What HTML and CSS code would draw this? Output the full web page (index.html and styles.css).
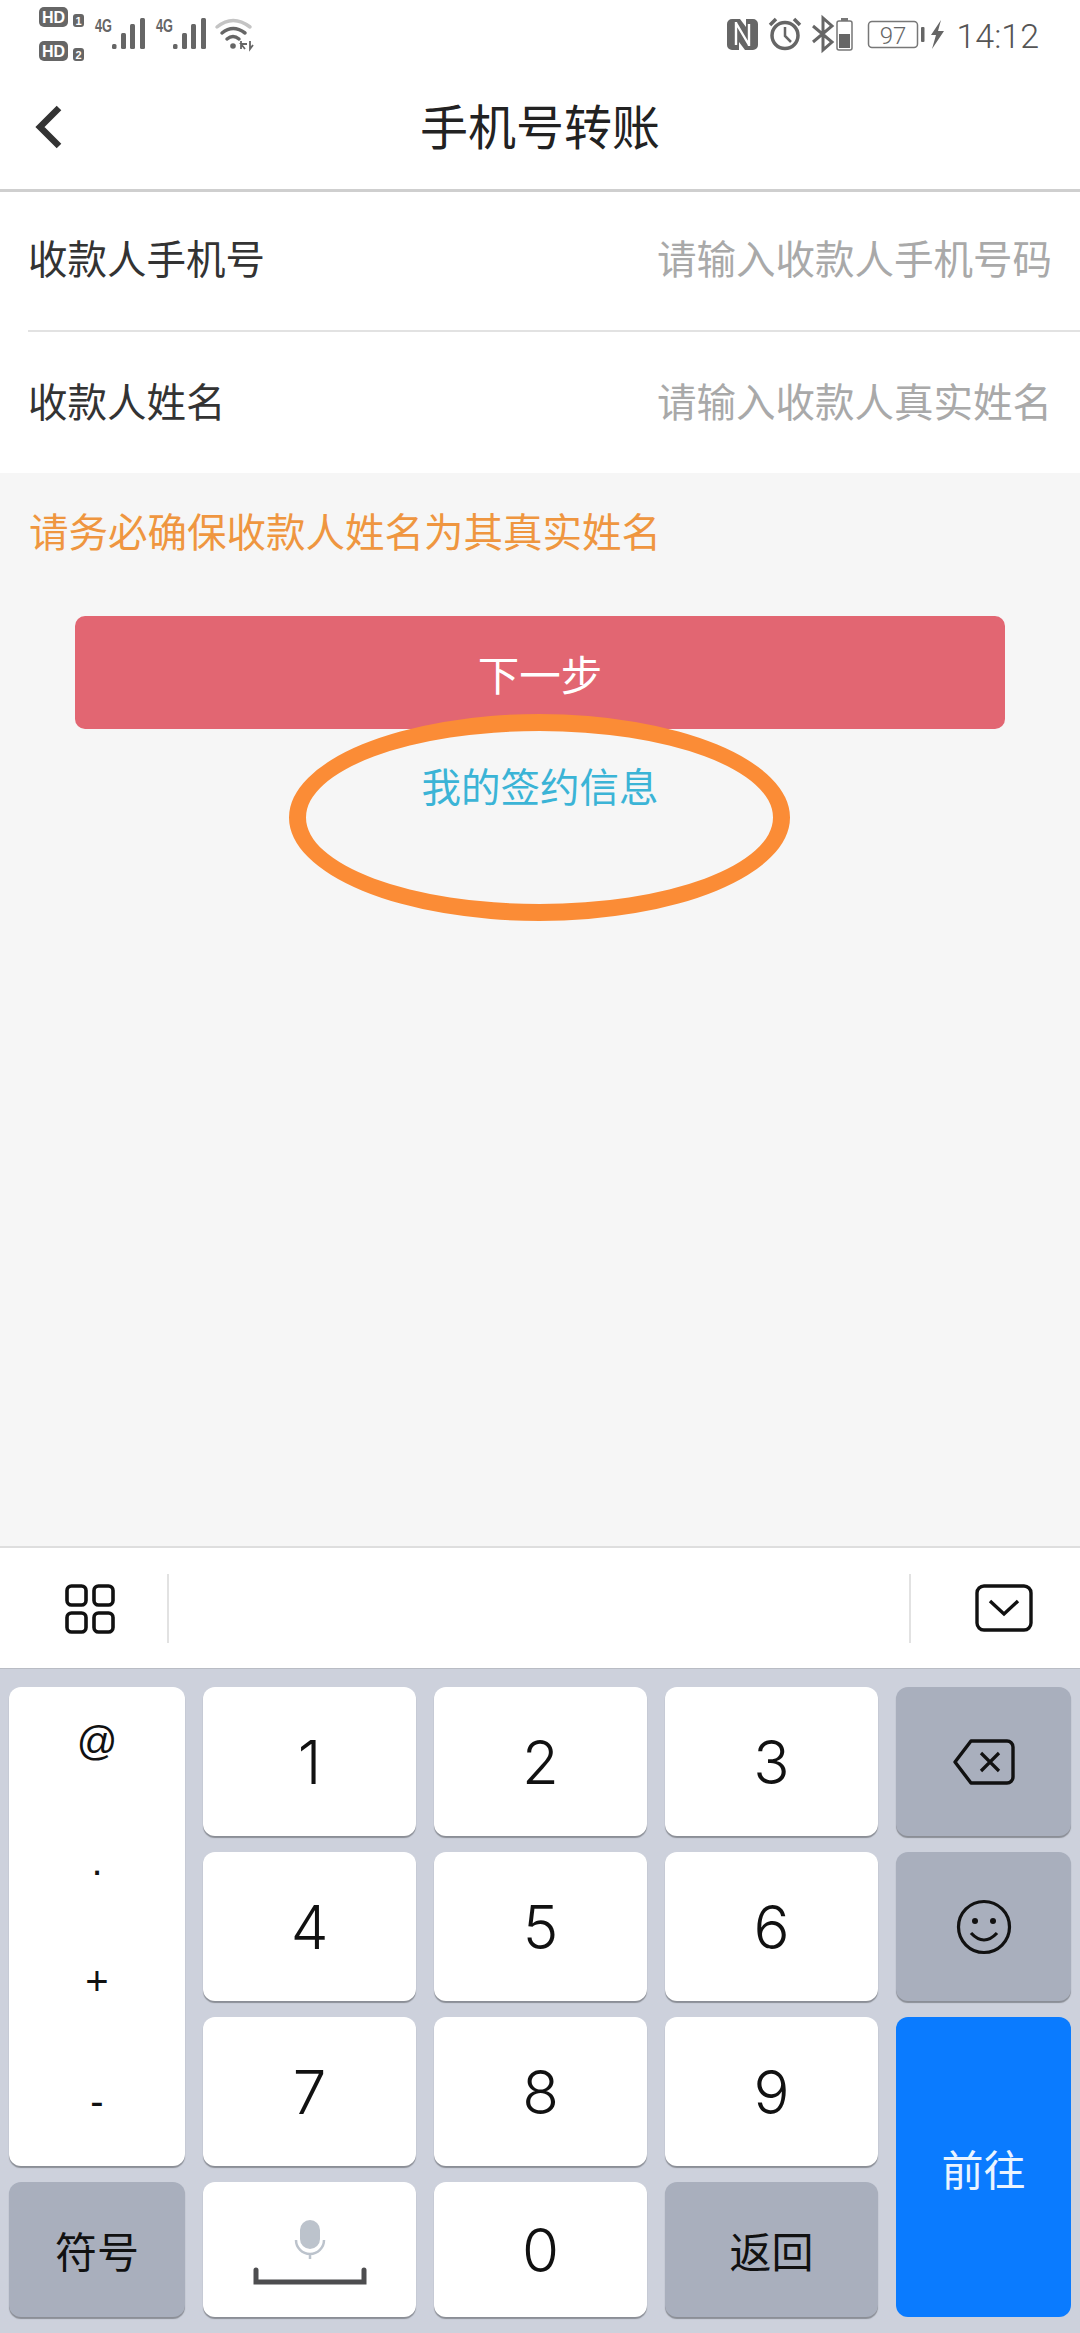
FILE: index.html
```html
<!DOCTYPE html>
<html lang="zh-CN">
<head>
<meta charset="utf-8">
<title>手机号转账</title>
<link rel="stylesheet" href="styles.css">
</head>
<body>
<div class="page">
  <div class="status">
    <svg class="status-left" viewBox="0 0 260 64" width="260" height="64">
      <rect x="39" y="7" width="29" height="20" rx="5" fill="#666"/>
      <text x="53.5" y="23" class="hd">HD</text>
      <rect x="73" y="14" width="11" height="13" rx="3" fill="#666"/>
      <text x="78.5" y="25" class="hdn">1</text>
      <rect x="39" y="41" width="29" height="20" rx="5" fill="#666"/>
      <text x="53.5" y="57" class="hd">HD</text>
      <rect x="73" y="48" width="11" height="13" rx="3" fill="#666"/>
      <text x="78.5" y="59" class="hdn">2</text>
      <text x="95" y="32" class="g4" textLength="17" lengthAdjust="spacingAndGlyphs">4G</text>
      <g fill="#666">
        <rect x="112" y="44" width="4.5" height="5" rx="1.5"/>
        <rect x="121" y="33" width="5" height="16" rx="1.5"/>
        <rect x="130" y="24" width="5" height="25" rx="1.5"/>
        <rect x="140" y="18" width="5" height="31" rx="1.5"/>
      </g>
      <text x="156" y="32" class="g4" textLength="17" lengthAdjust="spacingAndGlyphs">4G</text>
      <g fill="#666">
        <rect x="173" y="44" width="4.5" height="5" rx="1.5"/>
        <rect x="182" y="33" width="5" height="16" rx="1.5"/>
        <rect x="191" y="24" width="5" height="25" rx="1.5"/>
        <rect x="201" y="18" width="5" height="31" rx="1.5"/>
      </g>
      <g fill="none" stroke-linecap="round">
        <path d="M217 27 Q233 14 250 27" stroke="#c4c4c4" stroke-width="3.5"/>
        <path d="M222 33 Q233 24 245 33" stroke="#666" stroke-width="3.5"/>
        <path d="M227 39 Q233 34 239 39" stroke="#666" stroke-width="3.5"/>
      </g>
      <circle cx="233" cy="46" r="2.8" fill="#666"/>
      <path d="M241 49 V41 M245 49 L241 44 H247 M250 41 V49 L253 45" fill="none" stroke="#666" stroke-width="1.8"/>
    </svg>
    <div class="status-right">
      <svg viewBox="732 0 218 64" width="218" height="64">
        <path d="M737 19 H745 L751 27 V19 H758 a5 5 0 0 1 5 5 V45 a5 5 0 0 1 -5 5 H750 L744 42 V50 H737 a5 5 0 0 1 -5 -5 V24 a5 5 0 0 1 5 -5 Z" fill="#666"/>
        <path d="M741 22 V45 M741 23 L754 45 M754 24 V46" fill="none" stroke="#fff" stroke-width="2.4"/>
        <circle cx="790" cy="35.5" r="13" fill="none" stroke="#666" stroke-width="3.5"/>
        <path d="M790 27 V36 L796 42" fill="none" stroke="#666" stroke-width="2.5"/>
        <path d="M775 25 L781 19 M805 25 L799 19" stroke="#666" stroke-width="3.5"/>
        <path d="M818 26 L837 42 L828 50 V18 L837 26 L818 42" fill="none" stroke="#666" stroke-width="3"/>
        <rect x="846" y="18" width="7" height="3" fill="#777"/>
        <rect x="842" y="21" width="15" height="29" rx="2" fill="none" stroke="#777" stroke-width="1.5"/>
        <rect x="844" y="34" width="11" height="14" fill="#666"/>
        <rect x="873.5" y="21.5" width="49" height="26" rx="3.5" fill="none" stroke="#777" stroke-width="1.5"/>
        <text x="898" y="44" class="pct">97</text>
        <rect x="926" y="27" width="3.5" height="15" rx="1" fill="#666"/>
        <path d="M946 20 L936 35 H941 L937 49 L949 31 H943 Z" fill="#666"/>
      </svg>
      <span class="time">14:12</span>
    </div>
  </div>

  <header class="nav">
    <svg class="back" viewBox="0 0 32 50" width="32" height="50">
      <path d="M27 6 L8 25 L27 44" fill="none" stroke="#333" stroke-width="6.5"/>
    </svg>
    <h1 class="title">手机号转账</h1>
  </header>

  <section class="form">
    <div class="row first"><span class="label">收款人手机号</span><span class="hint">请输入收款人手机号码</span></div>
    <div class="row"><span class="label">收款人姓名</span><span class="hint">请输入收款人真实姓名</span></div>
  </section>

  <main class="main">
    <p class="warn">请务必确保收款人姓名为其真实姓名</p>
    <div class="next">下一步</div>
    <div class="link">我的签约信息</div>
    <div class="circle"></div>
  </main>

  <div class="toolbar">
    <div class="tool-side">
      <svg viewBox="0 0 50 50" width="50" height="50">
        <g fill="none" stroke="#111" stroke-width="3.6">
          <rect x="2" y="2" width="19" height="19" rx="4.5"/>
          <rect x="29" y="2" width="19" height="19" rx="4.5"/>
          <rect x="2" y="29" width="19" height="19" rx="4.5"/>
          <rect x="29" y="29" width="19" height="19" rx="4.5"/>
        </g>
      </svg>
    </div>
    <div class="tool-mid"></div>
    <div class="tool-side right">
      <svg viewBox="0 0 58 48" width="58" height="48">
        <rect x="2" y="2" width="54" height="44" rx="7" fill="none" stroke="#111" stroke-width="3.4"/>
        <path d="M15 17 L29 30 L43 17" fill="none" stroke="#111" stroke-width="3.4"/>
      </svg>
    </div>
  </div>

  <div class="keyboard">
    <div class="key side-list">
      <span>@</span><span>.</span><span>+</span><span>-</span>
    </div>
    <div class="key digit">1</div>
    <div class="key digit">2</div>
    <div class="key digit">3</div>
    <div class="key gray">
      <svg viewBox="0 0 62 46" width="62" height="46">
        <path d="M18 2 H54 a6 6 0 0 1 6 6 V38 a6 6 0 0 1 -6 6 H18 L2 23 Z" fill="none" stroke="#111" stroke-width="3.4" stroke-linejoin="round"/>
        <path d="M28 14 L46 32 M46 14 L28 32" stroke="#111" stroke-width="3.2"/>
      </svg>
    </div>
    <div class="key digit">4</div>
    <div class="key digit">5</div>
    <div class="key digit">6</div>
    <div class="key gray">
      <svg viewBox="0 0 56 56" width="56" height="56">
        <circle cx="28" cy="28" r="25.5" fill="none" stroke="#111" stroke-width="3.2"/>
        <circle cx="19" cy="22" r="3" fill="#111"/>
        <circle cx="37" cy="22" r="3" fill="#111"/>
        <path d="M15 34 Q28 48 41 34" fill="none" stroke="#111" stroke-width="3.2"/>
      </svg>
    </div>
    <div class="key digit">7</div>
    <div class="key digit">8</div>
    <div class="key digit">9</div>
    <div class="key go">前往</div>
    <div class="key gray word sym">符号</div>
    <div class="key">
      <svg class="space" viewBox="0 0 114 66" width="114" height="66">
        <rect x="47" y="0" width="20" height="29" rx="10" fill="#bcc3cc"/>
        <path d="M43 20 a14 14 0 0 0 28 0 M57 34 V39" fill="none" stroke="#bcc3cc" stroke-width="2.5"/>
        <path d="M3 50 V62 H111 V50" fill="none" stroke="#4d4d4f" stroke-width="5" stroke-linecap="round"/>
      </svg>
    </div>
    <div class="key digit">0</div>
    <div class="key gray word">返回</div>
  </div>
</div>
</body>
</html>
```

FILE: styles.css
```css
* { box-sizing: border-box; }
html, body { margin: 0; padding: 0; }
body {
  font-family: "Liberation Sans", "Noto Sans CJK SC", sans-serif;
  background: #fff;
}
.page {
  width: 1080px;
  height: 2333px;
  display: flex;
  flex-direction: column;
  overflow: hidden;
}

/* status bar */
.status {
  height: 64px;
  display: flex;
  justify-content: space-between;
  background: #fff;
  flex: none;
}
.status svg { display: block; }
.status-right { display: flex; padding-right: 41px; }
.time {
  font-family: Roboto, "Liberation Sans", sans-serif;
  font-weight: 300;
  font-size: 34px;
  line-height: 72px;
  color: #555;
  margin-left: 11px;
}
.hd { font: 700 16px "Liberation Sans", sans-serif; fill: #fff; text-anchor: middle; }
.hdn { font: 700 11px "Liberation Sans", sans-serif; fill: #fff; text-anchor: middle; }
.g4 { font: 700 19px "Liberation Sans", sans-serif; fill: #666; }
.pct { font: 300 24px Roboto, sans-serif; fill: #666; text-anchor: middle; }

/* navigation */
.nav {
  height: 128px;
  flex: none;
  position: relative;
  display: flex;
  align-items: center;
  justify-content: center;
  padding-bottom: 5px;
  border-bottom: 3px solid #cfcfcf;
}
.back { position: absolute; left: 32px; top: 38px; }
.title {
  margin: 0;
  font-family: "Noto Sans CJK SC", sans-serif;
  font-weight: 400;
  font-size: 48px;
  line-height: 60px;
  color: #222;
}

/* form */
.form { flex: none; padding-left: 28px; background: #fff; }
.row {
  height: 141px;
  display: flex;
  justify-content: space-between;
  align-items: center;
  padding: 0 28px 7px 0;
  font-family: "Noto Sans CJK SC", sans-serif;
  font-size: 39.5px;
}
.row.first { height: 140px; padding-bottom: 9px; border-bottom: 2px solid #e2e2e2; }
.label { color: #333; }
.hint { color: #a9a9a9; }

/* main */
.main {
  flex: 1;
  background: #f6f6f6;
  position: relative;
  padding-top: 29px;
  font-family: "Noto Sans CJK SC", sans-serif;
}
.warn {
  margin: 0 0 0 29px;
  font-size: 39.5px;
  line-height: 56px;
  color: #ef9640;
}
.next {
  margin: 58px 75px 0;
  height: 113px;
  border-radius: 10px;
  background: #e26672;
  color: #fff;
  font-size: 41.5px;
  display: flex;
  align-items: center;
  justify-content: center;
}
.link {
  margin-top: 28px;
  text-align: center;
  font-size: 39.5px;
  line-height: 56px;
  color: #3bb4d6;
}
.circle {
  position: absolute;
  left: 289px;
  top: 241px;
  width: 501px;
  height: 207px;
  border-radius: 50%;
  border: 17px solid #fb8c36;
}

/* toolbar */
.toolbar {
  height: 123px;
  flex: none;
  display: flex;
  background: #fff;
  border-top: 2px solid #dedede;
  border-bottom: 1px solid #b9bcc4;
}
.tool-side {
  width: 167px;
  display: flex;
  padding: 36px 0 0 65px;
}
.tool-side.right { width: 169px; padding: 36px 0 0 64px; }
.tool-side svg { display: block; }
.tool-mid {
  flex: 1;
  margin: 26px 0 25px;
  border-left: 2px solid #e2e2e2;
  border-right: 2px solid #e2e2e2;
}

/* keyboard */
.keyboard {
  flex: none;
  height: 664px;
  background: #cdd1dc;
  padding: 18px 0 0 9px;
  display: grid;
  grid-template-columns: 176px 213px 213px 213px 175px;
  grid-template-rows: 149px 149px 149px 135px;
  gap: 16px 18px;
}
.key {
  background: #fff;
  border-radius: 12px;
  box-shadow: 0 2px 1px #8b8e96;
  display: flex;
  align-items: center;
  justify-content: center;
  color: #111;
}
.digit {
  font-family: Inter, "Liberation Sans", sans-serif;
  font-weight: 300;
  font-size: 60px;
}
.side-list {
  grid-row: 1 / span 3;
  flex-direction: column;
  justify-content: flex-start;
  padding-top: 25px;
  font-size: 40px;
}
.side-list span { flex: none; height: 120px; line-height: 58px; }
.gray { background: #a9afbd; }
.word {
  font-family: "Noto Sans CJK SC", sans-serif;
  font-size: 42px;
}
.go {
  grid-column: 5;
  grid-row: 3 / span 2;
  background: #0a7bff;
  color: #eaf4ff;
  font-family: "Noto Sans CJK SC", sans-serif;
  font-size: 42px;
  box-shadow: none;
}
.sym { grid-column: 1; grid-row: 4; }
.space { display: block; margin-top: 6px; }
```
